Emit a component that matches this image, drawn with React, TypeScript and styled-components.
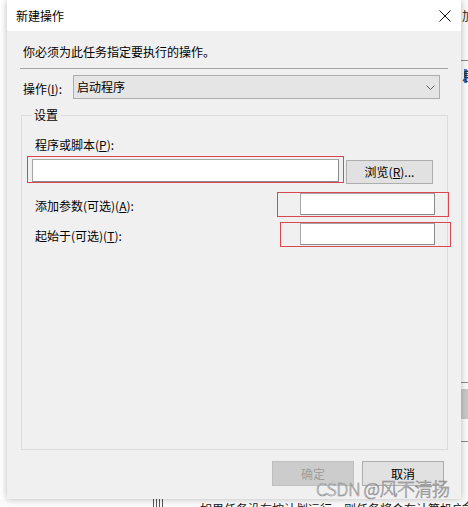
import React from "react";
import styled, { createGlobalStyle } from "styled-components";

const GlobalStyle = createGlobalStyle`
  html, body { margin: 0; padding: 0; background: #ffffff; }
  body {
    font-family: "Noto Sans CJK SC", "Noto Sans", "Liberation Sans", sans-serif;
    font-size: 12px;
    color: #000;
  }
  * { box-sizing: border-box; }
`;

const Desktop = styled.div`
  position: relative;
  width: 468px;
  height: 507px;
  overflow: hidden;
  display: grid;
  grid-template-columns: 7px 454px 7px;
  grid-template-rows: 499px 8px;
  background: #ffffff;
`;

const Dialog = styled.div`
  position: relative;
  z-index: 1;
  grid-column: 2;
  grid-row: 1;
  display: flex;
  flex-direction: column;
  background: #f0f0f0;
  box-shadow: 0 0 7px rgba(0, 0, 0, 0.28);
`;

const TitleBar = styled.div`
  height: 31px;
  flex: none;
  background: #ffffff;
  display: flex;
  align-items: center;
  justify-content: space-between;
  padding: 0 10px 0 9px;
`;

const Title = styled.span`
  font-size: 12px;
  line-height: 14px;
  margin-top: 1px;
`;

const Body = styled.div`
  flex: 1;
  display: flex;
  flex-direction: column;
  padding: 0 13px;
`;

const Intro = styled.div`
  margin-top: 14px;
  padding-left: 3px;
  line-height: 14px;
  height: 14px;
`;

const Separator = styled.div`
  margin-top: 9px;
  height: 1px;
  background: #a3a3a3;
`;

const OpRow = styled.div`
  margin-top: 6px;
  height: 24px;
  display: flex;
  align-items: center;
`;

const OpLabel = styled.span`
  width: 53px;
  padding-left: 3px;
  padding-top: 3px;
  line-height: 14px;
`;

const Select = styled.div`
  width: 367px;
  height: 24px;
  border: 1px solid #adadad;
  background: #e5e5e5;
  display: flex;
  align-items: center;
  justify-content: space-between;
  padding: 0 4px 0 3px;
  line-height: 14px;
`;

const Group = styled.fieldset`
  margin: 9px 0 0 1px;
  padding: 0 0 0 5px;
  min-width: 0;
  height: 342px;
  border: 1px solid #dcdcdc;
  display: block;
`;

const Legend = styled.legend`
  margin-left: 5px;
  padding: 0 2px;
  line-height: 14px;
`;

const FieldLabel = styled.div`
  margin: 16px 0 0 8px;
  line-height: 14px;
`;

const PathRow = styled.div`
  margin-top: 4px;
  display: flex;
  align-items: flex-start;
`;

const Mark = styled.div<{ $w: number; $pl: number; $pr: number; $pt: number; $pb: number }>`
  flex: none;
  width: ${(p) => p.$w}px;
  border: 1px solid #d9474f;
  padding: ${(p) => `${p.$pt}px ${p.$pr}px ${p.$pb}px ${p.$pl}px`};
  display: flex;
`;

const TextBox = styled.div<{ $h: number }>`
  flex: 1;
  height: ${(p) => p.$h}px;
  background: #ffffff;
  border: 1px solid #8a8a8a;
  border-top-color: #a6a6a6;
  border-left-color: #a6a6a6;
`;

const Button = styled.div<{ $disabled?: boolean }>`
  flex: none;
  display: flex;
  align-items: center;
  justify-content: center;
  line-height: 14px;
  border: 1px solid ${(p) => (p.$disabled ? "#bfbfbf" : "#adadad")};
  background: ${(p) => (p.$disabled ? "#cccccc" : "#e1e1e1")};
  color: ${(p) => (p.$disabled ? "#9d9d9d" : "#000")};
`;

const BrowseButton = styled(Button)`
  width: 87px;
  height: 24px;
  margin: 4px 0 0 2px;
`;

const ArgRow = styled.div<{ $mt: number }>`
  margin-top: ${(p) => p.$mt}px;
  display: flex;
  align-items: center;
`;

const ArgLabel = styled.span<{ $w: number }>`
  width: ${(p) => p.$w}px;
  margin-left: 8px;
  padding-top: 3px;
  line-height: 14px;
  flex: none;
`;

const ButtonRow = styled.div`
  margin-top: 11px;
  padding-right: 4px;
  display: flex;
  justify-content: flex-end;
  gap: 8px;
`;

const DialogButton = styled(Button)`
  width: 82px;
  height: 25px;
`;

const RightStrip = styled.div`
  grid-column: 3;
  grid-row: 1 / span 2;
  display: flex;
  flex-direction: column;
  overflow: hidden;
  background: #fbfbfb;
`;

const StripText = styled.div<{ $mt: number; $blue?: boolean }>`
  margin-top: ${(p) => p.$mt}px;
  margin-left: 1px;
  line-height: 14px;
  height: 14px;
  font-size: 12px;
  white-space: nowrap;
  color: #222;
  background: ${(p) => (p.$blue ? "linear-gradient(90deg, transparent 2px, #3c78d8 2px, #3c78d8 5px, transparent 5px)" : "none")};
`;

const StripLine = styled.div<{ $mt: number }>`
  margin-top: ${(p) => p.$mt}px;
  height: 1px;
  background: #8a8a8a;
  flex: none;
`;

const StripBlock = styled.div<{ $mt: number; $h: number }>`
  margin-top: ${(p) => p.$mt}px;
  height: ${(p) => p.$h}px;
  background: #c9c9c9;
  flex: none;
`;

const BottomStrip = styled.div`
  grid-column: 1 / span 2;
  grid-row: 2;
  display: flex;
  align-items: flex-start;
  overflow: hidden;
  background: #fbfbfb;
`;

const Bars = styled.div`
  margin-left: 153px;
  width: 12px;
  height: 8px;
  flex: none;
  background: repeating-linear-gradient(90deg, #555 0 1px, transparent 1px 3px);
`;

const ClippedText = styled.div`
  margin-left: 35px;
  margin-top: 3px;
  line-height: 14px;
  font-size: 12px;
  white-space: nowrap;
  color: #111;
`;

const Watermark = styled.div`
  position: absolute;
  z-index: 2;
  left: 316px;
  top: 477px;
  font-size: 18px;
  font-weight: 300;
  line-height: 22px;
  letter-spacing: -0.5px;
  white-space: nowrap;
  color: rgba(255, 255, 255, 0.75);
  -webkit-text-stroke: 0.6px #8a8a8a;
  pointer-events: none;
`;

const CloseIcon = () => (
  <svg width="12" height="12" viewBox="0 0 12 12" aria-hidden="true">
    <path d="M0.5 0.5 L11.5 11.5 M11.5 0.5 L0.5 11.5" stroke="#111" strokeWidth="1" fill="none" />
  </svg>
);

const Chevron = () => (
  <svg width="9" height="5" viewBox="0 0 9 5" aria-hidden="true">
    <path d="M0.5 0.5 L4.5 4.5 L8.5 0.5" stroke="#606060" strokeWidth="1" fill="none" />
  </svg>
);

export default function App() {
  return (
    <>
      <GlobalStyle />
      <Desktop>
        <Dialog>
          <TitleBar>
            <Title>新建操作</Title>
            <CloseIcon />
          </TitleBar>
          <Body>
            <Intro>你必须为此任务指定要执行的操作。</Intro>
            <Separator />
            <OpRow>
              <OpLabel>
                操作(<u>I</u>):
              </OpLabel>
              <Select>
                <span>启动程序</span>
                <Chevron />
              </Select>
            </OpRow>
            <Group>
              <Legend>设置</Legend>
              <FieldLabel>
                程序或脚本(<u>P</u>):
              </FieldLabel>
              <PathRow>
                <Mark $w={317} $pl={4} $pr={4} $pt={2} $pb={0}>
                  <TextBox $h={23} />
                </Mark>
                <BrowseButton>
                  浏览(<u>R</u>)...
                </BrowseButton>
              </PathRow>
              <ArgRow $mt={8}>
                <ArgLabel $w={242}>
                  添加参数(可选)(<u>A</u>):
                </ArgLabel>
                <Mark $w={172} $pl={22} $pr={13} $pt={0} $pb={1}>
                  <TextBox $h={22} />
                </Mark>
              </ArgRow>
              <ArgRow $mt={5}>
                <ArgLabel $w={245}>
                  起始于(可选)(<u>T</u>):
                </ArgLabel>
                <Mark $w={171} $pl={19} $pr={15} $pt={0} $pb={1}>
                  <TextBox $h={22} />
                </Mark>
              </ArgRow>
            </Group>
            <ButtonRow>
              <DialogButton $disabled>确定</DialogButton>
              <DialogButton>取消</DialogButton>
            </ButtonRow>
          </Body>
        </Dialog>
        <RightStrip>
          <StripText $mt={9}>加</StripText>
          <StripLine $mt={37} />
          <StripText $mt={8} $blue>
            息
          </StripText>
          <StripLine $mt={299} />
          <StripBlock $mt={6} $h={30} />
          <StripLine $mt={22} />
          <StripText $mt={58}>合</StripText>
        </RightStrip>
        <BottomStrip>
          <Bars />
          <ClippedText>如果任务没有按计划运行，则任务将会在计算机启动后尽快启动任务。</ClippedText>
        </BottomStrip>
        <Watermark>CSDN @风不清扬</Watermark>
      </Desktop>
    </>
  );
}
